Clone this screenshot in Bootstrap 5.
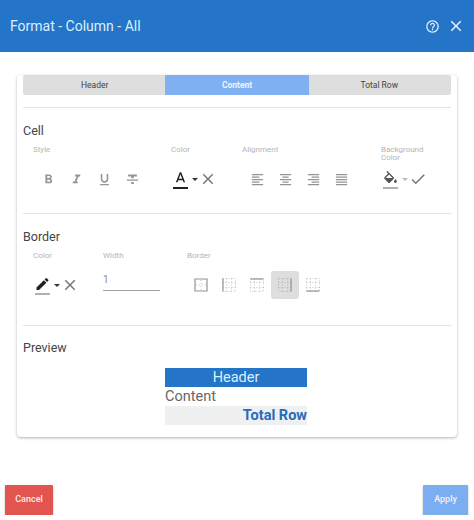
<!DOCTYPE html>
<html lang="en">
<head>
  <meta charset="UTF-8" />
  <meta name="viewport" content="width=device-width, initial-scale=1.0" />
  <title>Format - Column - All</title>
  <link href="https://cdn.jsdelivr.net/npm/bootstrap@5.3.3/dist/css/bootstrap.min.css" rel="stylesheet" />
  <style>
    body {
      background-color: #ffffff;
      font-family: Roboto, "Liberation Sans", sans-serif;
      color: #444;
      overflow: hidden;
    }
    svg { fill: currentColor; display: block; }
    .dlg-head {
      height: 52px;
      background-color: #2474c8;
      color: #d9f0ff;
      padding: 0 7px 0 10px;
    }
    .dlg-title { font-size: 14px; margin: 0; font-weight: 400; }
    .head-btn { width: 23px; height: 24px; color: #e6f2fc; }
    .dlg-panel {
      margin: 23px 17px 0 17px;
      height: 362px;
      padding: 0 6px;
      border: 0;
      border-radius: 4px;
      box-shadow: 0 1px 3px rgba(0, 0, 0, .3);
    }
    .tab-strip .btn {
      flex: 1 1 0;
      height: 20px;
      padding: 0;
      border: 0;
      border-radius: 2px;
      font-size: 8.5px;
      line-height: 20px;
      color: #444;
      background-color: #dedede;
    }
    .tab-strip .btn:not(:first-child) { border-top-left-radius: 0; border-bottom-left-radius: 0; margin-left: 0; }
    .tab-strip .btn:not(:last-child) { border-top-right-radius: 0; border-bottom-right-radius: 0; }
    .tab-strip .btn.active { background-color: #7fb0f2; color: #eef5ff; font-weight: 700; }
    .sep { margin: 0 2px; border-color: #e2e2e2; opacity: 1; }
    .sep-top { margin-top: 12px; }
    .sect { padding-top: 13px; }
    .sect-cell { height: 105px; }
    .sect-border { height: 111px; }
    .sect-preview { padding-top: 12px; }
    .sect-title { font-size: 12.5px; line-height: 20px; font-weight: 400; margin: 0; color: #444; }
    .fields { padding-left: 10px; margin-top: 5px; }
    .fld-label { font-size: 8px; line-height: 8px; height: 19px; color: #b4b4b4; }
    .w-style { width: 138px; }
    .w-color { width: 71px; }
    .w-align { width: 139px; }
    .w-bg { width: 60px; }
    .w-bcolor { width: 70px; }
    .w-bwidth { width: 84px; }
    .tools { height: 28px; }
    .tool { width: 28px; height: 28px; color: #949494; }
    .tool-first { margin-left: 1px; }
    .tool-on { background-color: #dedede; border-radius: 3px; }
    .tool svg { width: 15px; height: 15px; }
    .tool-border svg { width: 14px; height: 14px; }
    .clr { width: 18px; height: 28px; color: #1f1f1f; }
    .clr svg { width: 17px; height: 16px; }
    .clr-muted { color: #555; }
    .clr-bar { width: 15px; height: 2px; margin-top: 1px; background-color: #222; }
    .clr-bar-muted { background-color: #b0b0b0; }
    .caret-mini {
      width: 0;
      height: 0;
      margin: 0 1px 0 3px;
      border-left: 3px solid transparent;
      border-right: 3px solid transparent;
      border-top: 3px solid #333;
    }
    .caret-mute { border-top-color: #bbb; }
    .mini { width: 18px; height: 18px; color: #777; }
    .width-field,
    .width-field:focus {
      width: 57px;
      height: 20px;
      padding: 0 0 3px 0;
      border: 0;
      border-bottom: 1px solid #a0a0a0;
      border-radius: 0;
      font-size: 10px;
      color: #8a8a8a;
    }
    .prev-tbl { width: 142px; margin: 10px 0 0 142px; font-size: 14.5px; line-height: 19px; }
    .prev-head { background-color: #2474c8; color: #d9f0ff; text-align: center; }
    .prev-body { color: #666; }
    .prev-total { background-color: #eff0f2; color: #2a6bb8; font-weight: 700; text-align: right; }
    .dlg-foot { padding: 48px 6px 0 5px; }
    .act-btn {
      height: 30px;
      padding: 0;
      border: 0;
      border-radius: 1px;
      font-size: 9px;
      font-weight: 500;
      color: #fbeeee;
      box-shadow: 0 1px 2px rgba(0, 0, 0, .35);
    }
    .act-cancel { width: 48px; background-color: #e25450; }
    .act-apply { width: 45px; background-color: #7aaef0; }
    .dots { fill: none; stroke: currentColor; stroke-width: 1; stroke-dasharray: 1 2; opacity: .55; }
    .solid { fill: none; stroke: currentColor; stroke-width: 1.2; }
  </style>
</head>
<body>
  <svg width="0" height="0" class="position-absolute">
    <defs>
      <symbol id="b-grid" viewBox="0 0 14 14">
        <path class="dots" d="M.5.5h13v13H.5zM4.5.5v13M9.5.5v13M.5 4.5h13M.5 9.5h13"/>
      </symbol>
    </defs>
  </svg>

  <div class="dlg-head d-flex align-items-center justify-content-between">
    <h1 class="dlg-title">Format - Column - All</h1>
    <div class="d-flex">
      <span class="head-btn d-flex align-items-center justify-content-center">
        <svg width="15" height="15" viewBox="0 0 24 24"><path d="M11 18h2v-2h-2v2zm1-16C6.48 2 2 6.48 2 12s4.48 10 10 10 10-4.48 10-10S17.52 2 12 2zm0 18c-4.41 0-8-3.59-8-8s3.59-8 8-8 8 3.59 8 8-3.59 8-8 8zm0-14c-2.21 0-4 1.79-4 4h2c0-1.1.9-2 2-2s2 .9 2 2c0 2-3 1.75-3 5h2c0-2.25 3-2.5 3-5 0-2.21-1.79-4-4-4z"/></svg>
      </span>
      <span class="head-btn d-flex align-items-center justify-content-center">
        <svg width="18" height="18" viewBox="0 0 24 24"><path d="M19 6.41 17.59 5 12 10.59 6.41 5 5 6.41 10.59 12 5 17.59 6.41 19 12 13.41 17.59 19 19 17.59 13.41 12z"/></svg>
      </span>
    </div>
  </div>

  <div class="card dlg-panel">
    <div class="btn-group tab-strip d-flex" role="group">
      <button type="button" class="btn">Header</button>
      <button type="button" class="btn active">Content</button>
      <button type="button" class="btn">Total Row</button>
    </div>
    <hr class="sep sep-top" />

    <div class="sect sect-cell">
      <h2 class="sect-title">Cell</h2>
      <div class="fields d-flex">
        <div class="w-style">
          <div class="fld-label">Style</div>
          <div class="tools d-flex tool-first">
            <span class="tool d-flex align-items-center justify-content-center"><svg viewBox="0 0 24 24"><path d="M15.6 10.79c.97-.67 1.65-1.77 1.65-2.79 0-2.26-1.75-4-4-4H7v14h7.04c2.09 0 3.71-1.7 3.71-3.79 0-1.52-.86-2.82-2.15-3.42zM10 6.5h3c.83 0 1.5.67 1.5 1.5s-.67 1.5-1.5 1.5h-3v-3zm3.5 9H10v-3h3.5c.83 0 1.5.67 1.5 1.5s-.67 1.5-1.5 1.5z"/></svg></span>
            <span class="tool d-flex align-items-center justify-content-center"><svg viewBox="0 0 24 24"><path d="M10 4v3h2.21l-3.42 8H6v3h8v-3h-2.21l3.42-8H18V4z"/></svg></span>
            <span class="tool d-flex align-items-center justify-content-center"><svg viewBox="0 0 24 24"><path d="M12 17c3.31 0 6-2.69 6-6V3h-2.5v8c0 1.93-1.57 3.5-3.5 3.5S8.5 12.93 8.5 11V3H6v8c0 3.31 2.69 6 6 6zm-7 2v2h14v-2H5z"/></svg></span>
            <span class="tool d-flex align-items-center justify-content-center"><svg viewBox="0 0 24 24"><path d="M10 19h4v-3h-4v3zM5 4v3h5v3h4V7h5V4H5zM3 14h18v-2H3v2z"/></svg></span>
          </div>
        </div>
        <div class="w-color">
          <div class="fld-label">Color</div>
          <div class="tools d-flex align-items-center">
            <span class="clr d-flex flex-column align-items-center justify-content-center">
              <svg viewBox="0 0 24 20"><path d="M11 2 5.5 16h2.25l1.12-3h6.25l1.12 3h2.25L13 2h-2zm-1.38 9L12 4.67 14.38 11H9.62z"/></svg>
              <span class="clr-bar"></span>
            </span>
            <span class="caret-mini"></span>
            <svg class="mini" viewBox="0 0 24 24"><path d="M19 6.41 17.59 5 12 10.59 6.41 5 5 6.41 10.59 12 5 17.59 6.41 19 12 13.41 17.59 19 19 17.59 13.41 12z"/></svg>
          </div>
        </div>
        <div class="w-align">
          <div class="fld-label">Alignment</div>
          <div class="tools d-flex tool-first">
            <span class="tool d-flex align-items-center justify-content-center"><svg viewBox="0 0 24 24"><path d="M15 15H3v2h12v-2zm0-8H3v2h12V7zM3 13h18v-2H3v2zm0 8h18v-2H3v2zM3 3v2h18V3H3z"/></svg></span>
            <span class="tool d-flex align-items-center justify-content-center"><svg viewBox="0 0 24 24"><path d="M7 15v2h10v-2H7zm-4 6h18v-2H3v2zm0-8h18v-2H3v2zm4-6v2h10V7H7zM3 3v2h18V3H3z"/></svg></span>
            <span class="tool d-flex align-items-center justify-content-center"><svg viewBox="0 0 24 24"><path d="M3 21h18v-2H3v2zm6-4h12v-2H9v2zm-6-4h18v-2H3v2zm6-4h12V7H9v2zM3 3v2h18V3H3z"/></svg></span>
            <span class="tool d-flex align-items-center justify-content-center"><svg viewBox="0 0 24 24"><path d="M3 21h18v-2H3v2zm0-4h18v-2H3v2zm0-4h18v-2H3v2zm0-4h18V7H3v2zm0-6v2h18V3H3z"/></svg></span>
          </div>
        </div>
        <div class="w-bg">
          <div class="fld-label">Background Color</div>
          <div class="tools d-flex align-items-center">
            <span class="clr clr-muted d-flex flex-column align-items-center justify-content-center">
              <svg viewBox="0 0 24 20"><path d="M16.56 8.94 7.62 0 6.21 1.41l2.38 2.38-5.15 5.15c-.59.59-.59 1.54 0 2.12l5.5 5.5c.29.29.68.44 1.06.44s.77-.15 1.06-.44l5.5-5.5c.59-.58.59-1.53 0-2.12zM5.21 10 10 5.21 14.79 10H5.21zM19 11.5s-2 2.17-2 3.5c0 1.1.9 2 2 2s2-.9 2-2c0-1.33-2-3.5-2-3.5z"/></svg>
              <span class="clr-bar clr-bar-muted"></span>
            </span>
            <span class="caret-mini caret-mute"></span>
            <svg class="mini" viewBox="0 0 24 24"><path d="M9 16.17 4.83 12l-1.42 1.41L9 19 21 7l-1.41-1.41z"/></svg>
          </div>
        </div>
      </div>
    </div>
    <hr class="sep" />

    <div class="sect sect-border">
      <h2 class="sect-title">Border</h2>
      <div class="fields d-flex">
        <div class="w-bcolor">
          <div class="fld-label">Color</div>
          <div class="tools d-flex align-items-center">
            <span class="clr d-flex flex-column align-items-center justify-content-center">
              <svg viewBox="0 0 24 24"><path d="M3 17.25V21h3.75L17.81 9.94l-3.75-3.75L3 17.25zM20.71 7.04c.39-.39.39-1.02 0-1.41l-2.34-2.34a.9959.9959 0 0 0-1.41 0l-1.83 1.83 3.75 3.75 1.83-1.83z"/></svg>
              <span class="clr-bar clr-bar-muted"></span>
            </span>
            <span class="caret-mini"></span>
            <svg class="mini" viewBox="0 0 24 24"><path d="M19 6.41 17.59 5 12 10.59 6.41 5 5 6.41 10.59 12 5 17.59 6.41 19 12 13.41 17.59 19 19 17.59 13.41 12z"/></svg>
          </div>
        </div>
        <div class="w-bwidth">
          <div class="fld-label">Width</div>
          <input type="text" class="form-control width-field" value="1" />
        </div>
        <div>
          <div class="fld-label">Border</div>
          <div class="tools d-flex">
            <span class="tool tool-border d-flex align-items-center justify-content-center"><svg viewBox="0 0 14 14"><path class="dots" d="M7 2v10M2 7h10"/><path class="solid" d="M1 1h12v12H1z"/></svg></span>
            <span class="tool tool-border d-flex align-items-center justify-content-center"><svg viewBox="0 0 14 14"><use href="#b-grid"/><path class="solid" d="M1 .5v13"/></svg></span>
            <span class="tool tool-border d-flex align-items-center justify-content-center"><svg viewBox="0 0 14 14"><use href="#b-grid"/><path class="solid" d="M.5 1h13"/></svg></span>
            <span class="tool tool-border tool-on d-flex align-items-center justify-content-center"><svg viewBox="0 0 14 14"><use href="#b-grid"/><path class="solid" d="M13 .5v13"/></svg></span>
            <span class="tool tool-border d-flex align-items-center justify-content-center"><svg viewBox="0 0 14 14"><use href="#b-grid"/><path class="solid" d="M.5 13h13"/></svg></span>
          </div>
        </div>
      </div>
    </div>
    <hr class="sep" />

    <div class="sect sect-preview">
      <h2 class="sect-title">Preview</h2>
      <div class="prev-tbl">
        <div class="prev-head">Header</div>
        <div class="prev-body">Content</div>
        <div class="prev-total">Total Row</div>
      </div>
    </div>
  </div>

  <div class="dlg-foot d-flex justify-content-between">
    <button type="button" class="btn act-btn act-cancel">Cancel</button>
    <button type="button" class="btn act-btn act-apply">Apply</button>
  </div>

  <script src="https://cdn.jsdelivr.net/npm/bootstrap@5.3.3/dist/js/bootstrap.bundle.min.js"></script>
</body>
</html>
